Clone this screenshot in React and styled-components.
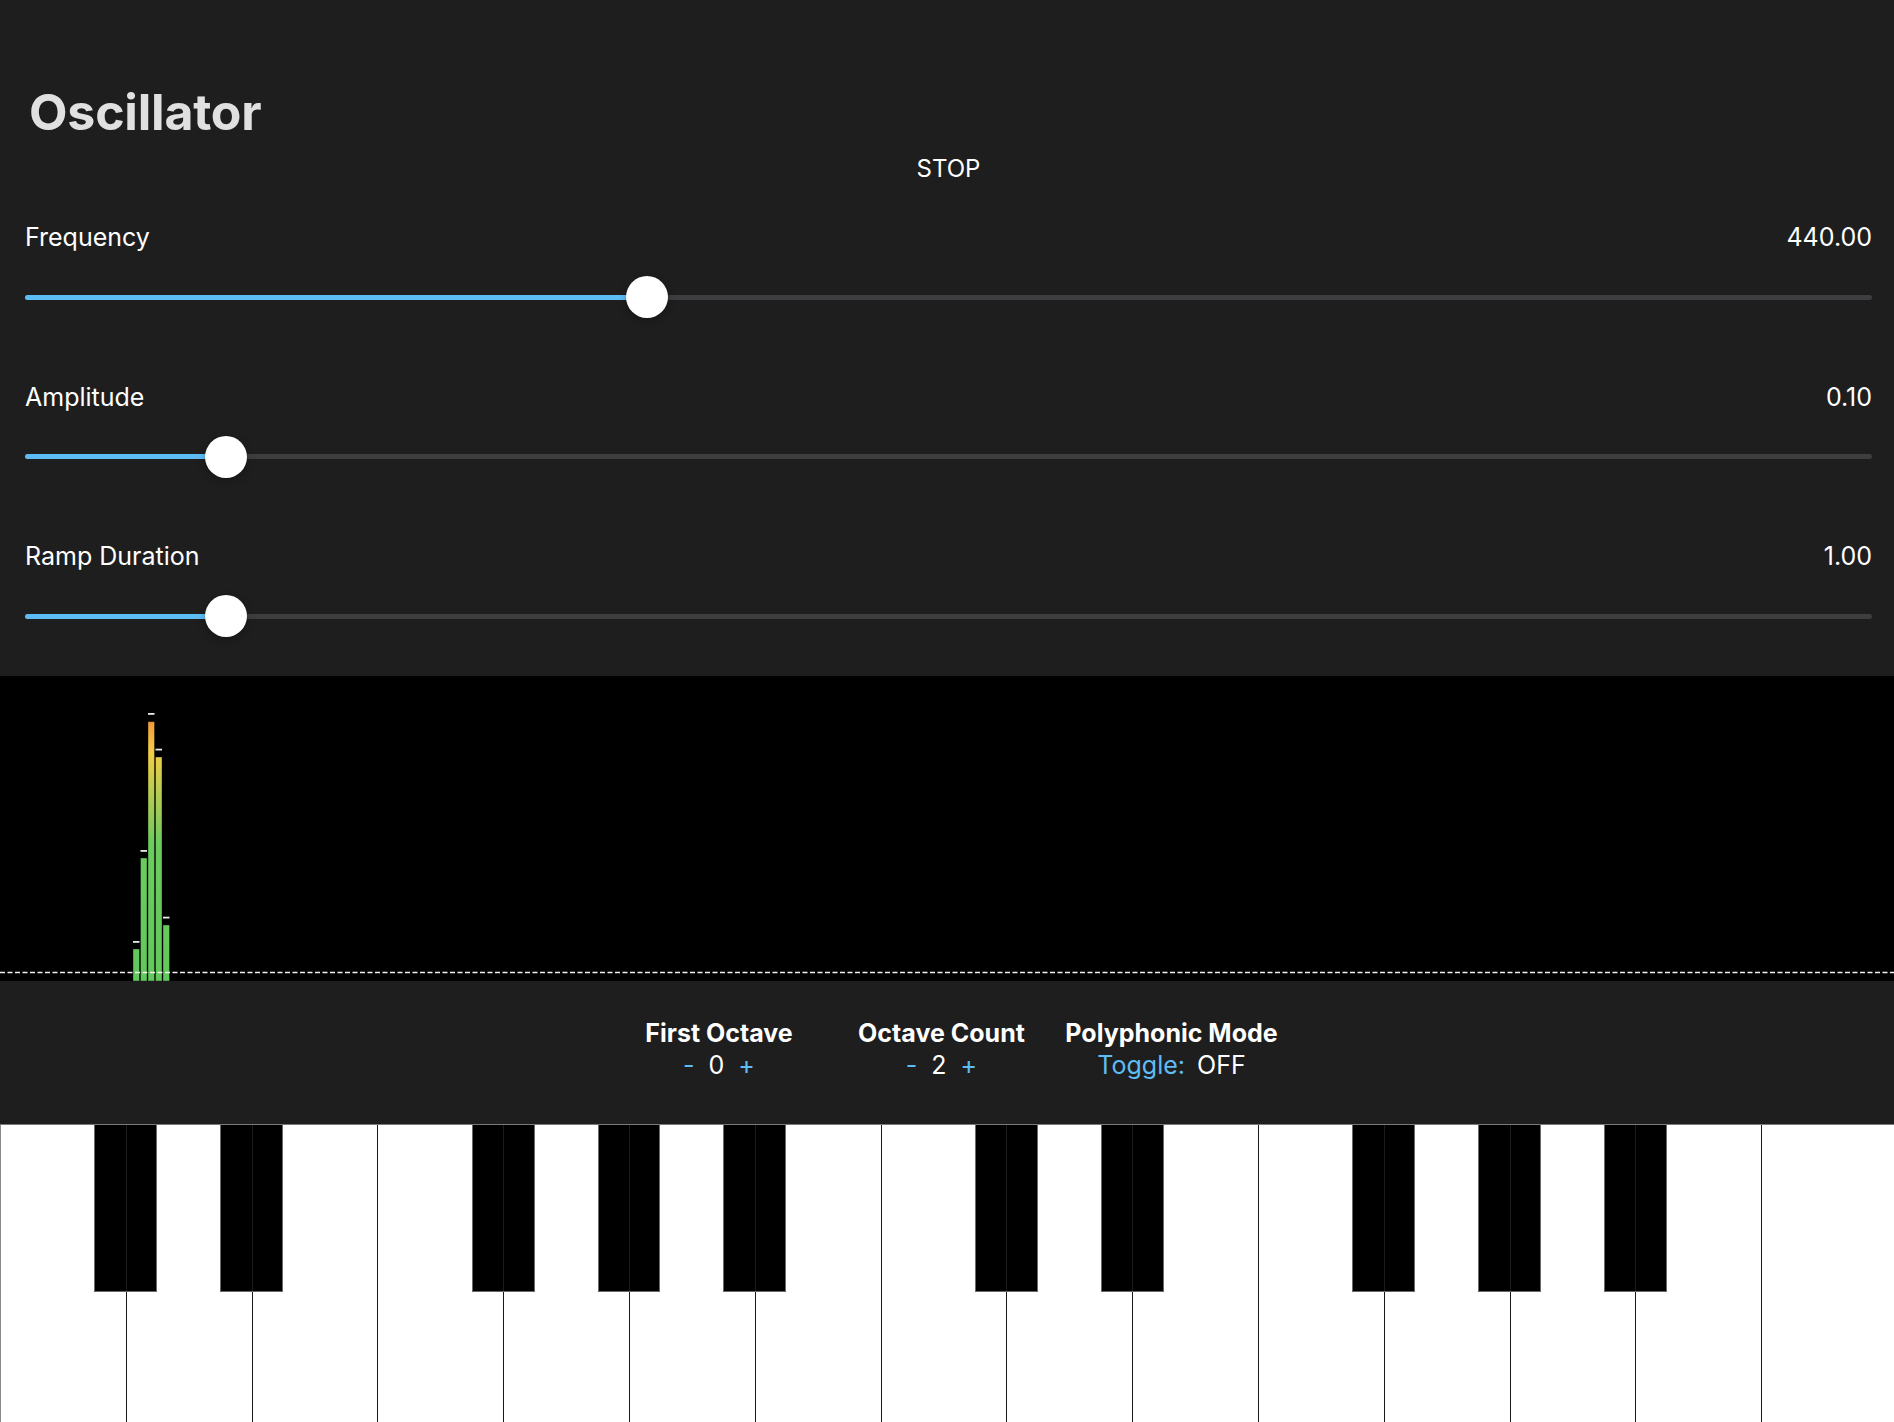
import React from 'react';
import styled, { createGlobalStyle } from 'styled-components';

const GlobalStyle = createGlobalStyle`
  html, body {
    margin: 0;
    padding: 0;
    background: #1e1e1e;
    overflow: hidden;
  }
  * {
    box-sizing: border-box;
  }
`;

const ACCENT = '#5ebcf4';
const KEY_W = 125.8;

const Page = styled.div`
  width: 1894px;
  height: 1422px;
  display: flex;
  flex-direction: column;
  font-family: Inter, "Noto Sans", sans-serif;
  color: #fff;
  background: #1e1e1e;
`;

const TopPanel = styled.section`
  display: flex;
  flex-direction: column;
  padding: 86.8px 22px 38.5px 25px;
`;

const Title = styled.h1`
  margin: 0;
  padding-left: 4px;
  font-size: 50px;
  line-height: 1;
  font-weight: 700;
  letter-spacing: -0.2px;
  color: #e0e0e0;
`;

const StopButton = styled.div`
  margin-top: 20.2px;
  align-self: center;
  font-size: 24px;
  line-height: 1;
  color: #fff;
  cursor: pointer;
`;

const Sliders = styled.div`
  margin-top: 44.5px;
  display: flex;
  flex-direction: column;
  gap: 66.5px;
`;

const Group = styled.div`
  display: flex;
  flex-direction: column;
  gap: 26px;
`;

const LabelRow = styled.div`
  display: flex;
  justify-content: space-between;
  font-size: 25px;
  line-height: 1;
  color: #fff;
`;

const Track = styled.div`
  position: relative;
  height: 42px;
  display: flex;
  align-items: center;
`;

const Rail = styled.div`
  width: 100%;
  height: 5px;
  border-radius: 3px;
  background: #3e3e40;
  display: flex;
`;

const Fill = styled.div`
  height: 100%;
  border-radius: 3px;
  background: ${ACCENT};
  width: calc(${p => p.$frac} * (100% - 42px) + 21px);
`;

const Thumb = styled.div`
  position: absolute;
  top: 0;
  left: calc(${p => p.$frac} * (100% - 42px) - 1px);
  width: 42px;
  height: 42px;
  border-radius: 50%;
  background: #fff;
  box-shadow: 0 3px 8px rgba(0, 0, 0, 0.25), 0 0 1px rgba(0, 0, 0, 0.3);
`;

const Spectrum = styled.div`
  height: 305px;
  background: #000;
  svg {
    display: block;
  }
`;

const Controls = styled.section`
  height: 143px;
  padding-top: 40.5px;
  display: flex;
  justify-content: center;
  padding-left: 4px;
`;

const Column = styled.div`
  width: ${p => p.$width}px;
  display: flex;
  flex-direction: column;
  align-items: center;
  gap: 7px;
`;

const ColumnTitle = styled.div`
  font-size: 25px;
  line-height: 1;
  font-weight: 700;
  color: #fff;
`;

const Stepper = styled.div`
  display: flex;
  align-items: center;
  gap: ${p => p.$gap}px;
  font-size: 25px;
  line-height: 1;
`;

const StepBtn = styled.span`
  color: ${ACCENT};
  cursor: pointer;
`;

const Value = styled.span`
  color: #fff;
`;

const Keyboard = styled.div`
  position: relative;
  flex: 1;
  display: flex;
  border-top: 1px solid #7a7a7a;
  background: #fff;
`;

const WhiteKey = styled.div`
  flex: ${p => (p.$last ? '1' : `0 0 ${KEY_W}px`)};
  background: #fff;
  border-left: 1px solid ${p => (p.$first ? '#8a8a8a' : '#1a1a1a')};
`;

const BlackKey = styled.div`
  position: absolute;
  top: 0;
  height: 167px;
  left: ${p => p.$at * KEY_W - KEY_W / 4}px;
  width: ${KEY_W / 2}px;
  background: #000;
  border: 1px solid #6a6a6a;
  border-top: none;
  &::after {
    content: '';
    position: absolute;
    top: 0;
    bottom: 0;
    left: 50%;
    width: 1px;
    background: #1c1c1c;
  }
`;

const bars = [
  { top: 273, peak: 265 },
  { top: 182, peak: 174 },
  { top: 45.7, peak: 37 },
  { top: 81, peak: 72.7 },
  { top: 249, peak: 240.7 },
];

function Slider({ label, value, frac }) {
  return (
    <Group>
      <LabelRow>
        <span>{label}</span>
        <span>{value}</span>
      </LabelRow>
      <Track>
        <Rail>
          <Fill $frac={frac} />
        </Rail>
        <Thumb $frac={frac} />
      </Track>
    </Group>
  );
}

function SpectrumView() {
  return (
    <Spectrum>
      <svg width="100%" height="305">
        <defs>
          <linearGradient id="barGrad" gradientUnits="userSpaceOnUse" x1="0" y1="0" x2="0" y2="305">
            <stop offset="0.13" stopColor="#f0903a" />
            <stop offset="0.25" stopColor="#f3cd46" />
            <stop offset="0.55" stopColor="#6ccb5f" />
            <stop offset="1" stopColor="#62c85c" />
          </linearGradient>
        </defs>
        {bars.map((b, i) => {
          const x = 133 + i * 7.5;
          return (
            <g key={i}>
              <rect x={x} y={b.top} width={6.5} height={305 - b.top} fill="url(#barGrad)" stroke="rgba(0,0,0,0.45)" strokeWidth="0.8" />
              <rect x={x} y={b.peak} width={6.5} height={1.8} fill="#e8e8e8" />
            </g>
          );
        })}
        <line x1="0" y1="296.5" x2="100%" y2="296.5" stroke="#f2f2f2" strokeWidth="1.3" strokeDasharray="5 2.5" />
      </svg>
    </Spectrum>
  );
}

const blackKeys = [1, 2, 4, 5, 6, 8, 9, 11, 12, 13];

function PianoKeyboard() {
  return (
    <Keyboard>
      {Array.from({ length: 15 }, (_, i) => (
        <WhiteKey key={i} $first={i === 0} $last={i === 14} />
      ))}
      {blackKeys.map(at => (
        <BlackKey key={at} $at={at} />
      ))}
    </Keyboard>
  );
}

export default function App() {
  return (
    <Page>
      <GlobalStyle />
      <TopPanel>
        <Title>Oscillator</Title>
        <StopButton>STOP</StopButton>
        <Sliders>
          <Slider label="Frequency" value="440.00" frac={1 / 3} />
          <Slider label="Amplitude" value="0.10" frac={0.1} />
          <Slider label="Ramp Duration" value="1.00" frac={0.1} />
        </Sliders>
      </TopPanel>
      <SpectrumView />
      <Controls>
        <Column $width={222}>
          <ColumnTitle>First Octave</ColumnTitle>
          <Stepper $gap={14}>
            <StepBtn>-</StepBtn>
            <Value>0</Value>
            <StepBtn>+</StepBtn>
          </Stepper>
        </Column>
        <Column $width={223}>
          <ColumnTitle>Octave Count</ColumnTitle>
          <Stepper $gap={14}>
            <StepBtn>-</StepBtn>
            <Value>2</Value>
            <StepBtn>+</StepBtn>
          </Stepper>
        </Column>
        <Column $width={237}>
          <ColumnTitle>Polyphonic Mode</ColumnTitle>
          <Stepper $gap={12}>
            <StepBtn>Toggle:</StepBtn>
            <Value>OFF</Value>
          </Stepper>
        </Column>
      </Controls>
      <PianoKeyboard />
    </Page>
  );
}
